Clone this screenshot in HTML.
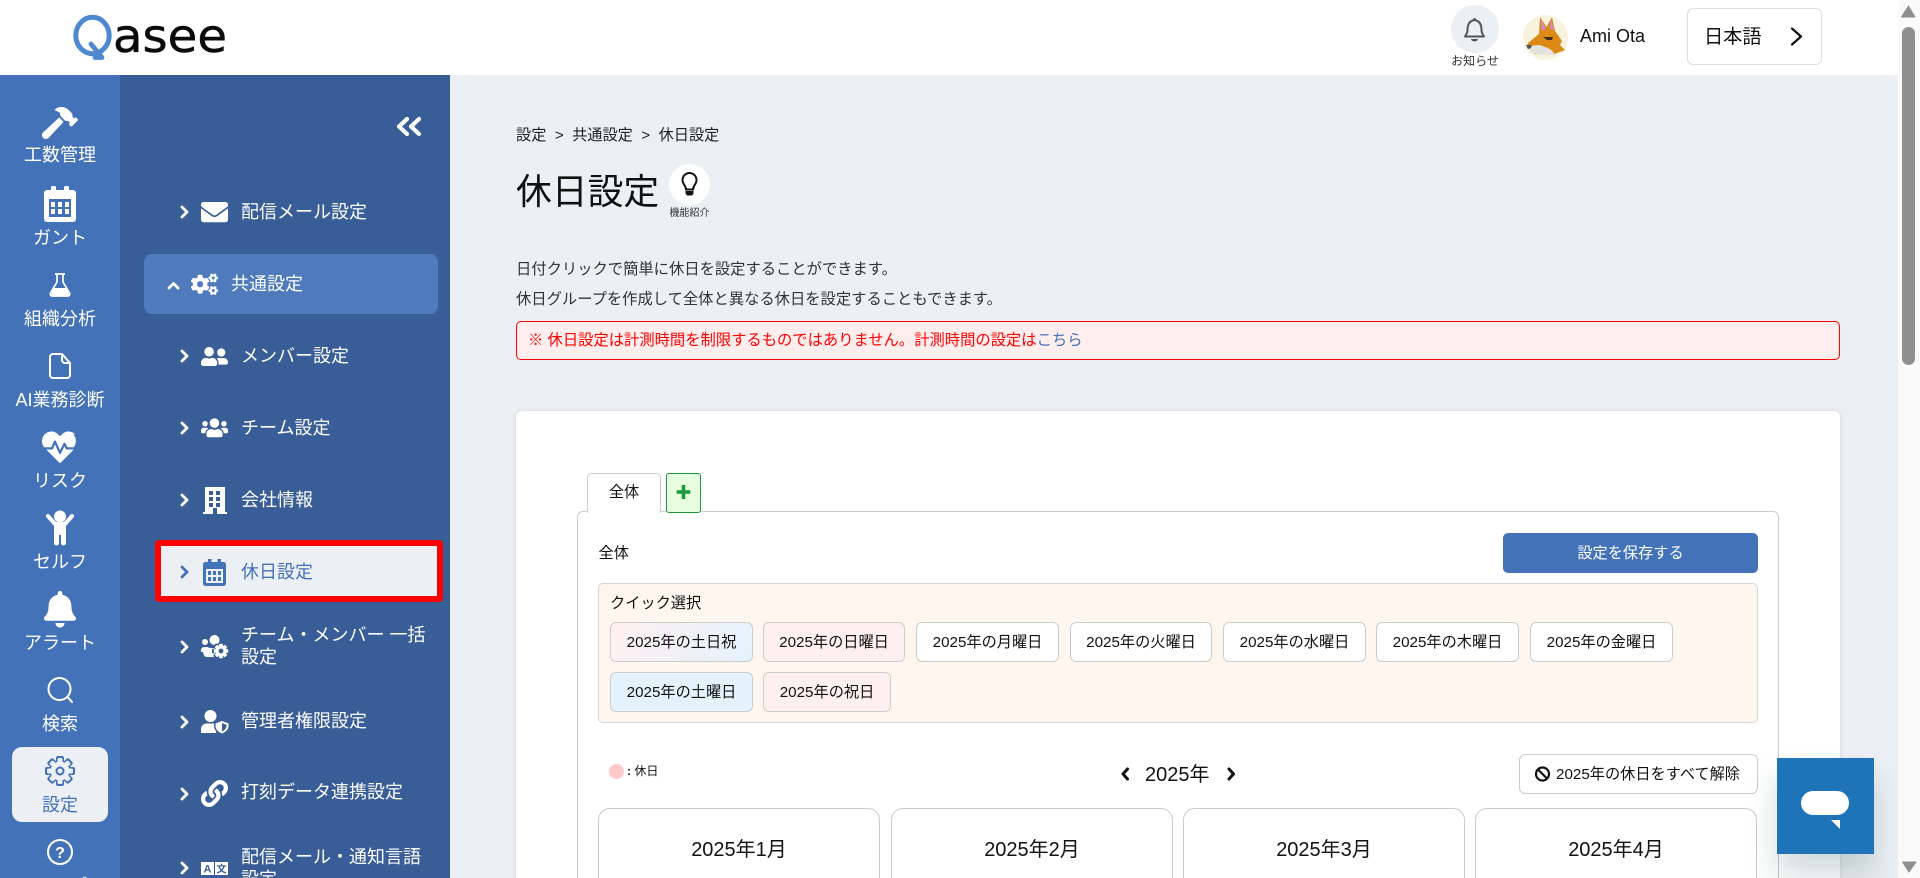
<!DOCTYPE html>
<html lang="ja"><head><meta charset="utf-8"><title>休日設定</title>
<style>
html,body{margin:0;padding:0;width:1920px;height:878px;overflow:hidden;background:#eceff4}
body{font-family:"Liberation Sans","Noto Sans CJK JP",sans-serif;color:#222;position:relative}
div{box-sizing:border-box}
.a{position:absolute}
.t{position:absolute;line-height:22px;white-space:nowrap}
.s1{position:absolute;left:0;width:120px;text-align:center;color:#fff;font-size:18px;line-height:22px;white-space:nowrap}
.s2{position:absolute;left:241px;color:#fff;font-size:18px;line-height:22px;white-space:nowrap}
.b{position:absolute;height:40px;border:1px solid #ccc;border-radius:6px;background:#fff;font-size:15.2px;line-height:40px;text-align:center;color:#111;white-space:nowrap}
.c{position:absolute;top:808px;height:90px;border:1px solid #ccc;border-radius:12px;background:#fff;font-size:20px;line-height:82px;text-align:center;color:#111}
</style></head><body>
<div class="a" style="left:0;top:0;width:1898px;height:75px;background:#fff"></div>
<div class="a" style="left:0;top:75px;width:120px;height:803px;background:#4472b9"></div>
<div class="a" style="left:120px;top:75px;width:330px;height:803px;background:#395e97"></div>
<div class="a" style="left:144px;top:254px;width:294px;height:60px;background:#4f7bbd;border-radius:8px"></div>
<div class="a" style="left:155px;top:540px;width:288px;height:62px;background:#eceff4;border:6px solid #f00;border-radius:4px"></div>
<div class="a" style="left:12px;top:747px;width:96px;height:75px;background:#eceff4;border-radius:10px"></div>
<div class="a" style="left:516px;top:411px;width:1324px;height:480px;background:#fff;border-radius:6px;box-shadow:0 0 4px rgba(0,0,0,.12)"></div>
<div class="a" style="left:516px;top:321px;width:1324px;height:39px;background:#ffeeee;border:1px solid #f00;border-radius:5px"></div>
<div class="a" style="left:669px;top:164px;width:41px;height:41px;background:#fff;border-radius:50%"></div>
<div class="a" style="left:1451px;top:5px;width:48px;height:48px;background:#eceff4;border-radius:50%"></div>
<div class="a" style="left:1687px;top:8px;width:135px;height:57px;background:#fff;border:1px solid #ddd;border-radius:6px"></div>
<div class="a" style="left:577px;top:511px;width:1202px;height:400px;border:1px solid #ccc;border-radius:6px;background:#fff"></div>
<div class="a" style="left:587px;top:473px;width:74px;height:40px;border:1px solid #ccc;border-bottom:0;border-radius:5px 5px 0 0;background:#fff"></div>
<div class="a" style="left:666px;top:473px;width:35px;height:40px;border:1px solid #1a9a3c;border-radius:3px;background:#e8fde0"></div>
<div class="a" style="left:598px;top:583px;width:1160px;height:140px;background:#fff6ef;border:1px solid #d5d5d5;border-radius:5px"></div>

<svg class="a" style="left:0;top:0" width="1920" height="878" viewBox="0 0 1920 878">
<defs>
<g id="g"><circle r="11"/><rect x="-4" y="-15" width="8" height="30" rx="2"/><rect x="-4" y="-15" width="8" height="30" rx="2" transform="rotate(45)"/><rect x="-4" y="-15" width="8" height="30" rx="2" transform="rotate(90)"/><rect x="-4" y="-15" width="8" height="30" rx="2" transform="rotate(135)"/></g>
<g id="gi"><circle r="9.5"/><rect x="-2.5" y="-13" width="5" height="26" rx="1.5"/><rect x="-2.5" y="-13" width="5" height="26" rx="1.5" transform="rotate(45)"/><rect x="-2.5" y="-13" width="5" height="26" rx="1.5" transform="rotate(90)"/><rect x="-2.5" y="-13" width="5" height="26" rx="1.5" transform="rotate(135)"/></g>
<path id="ch" d="M182 -5 L187 0 L182 5" fill="none" stroke-width="2.8" stroke-linecap="round" stroke-linejoin="round"/>
</defs>
<!-- logo -->
<ellipse cx="92.500" cy="35.500" rx="16.700" ry="18.200" fill="none" stroke="#4d88d0" stroke-width="5"/>
<path d="M91 44 L102 57.500 H95" fill="none" stroke="#4d88d0" stroke-width="4.800" stroke-linecap="round" stroke-linejoin="round"/>
<text x="113" y="52" font-family="DejaVu Sans" font-size="46" textLength="114" lengthAdjust="spacingAndGlyphs" fill="#0b0b0b" stroke="#0b0b0b" stroke-width=".5">asee</text>
<!-- hammer -->
<path transform="translate(42 107) scale(.0625)" fill="#fff" d="M571.31 193.94l-22.63-22.63c-6.25-6.25-16.38-6.25-22.63 0l-11.31 11.31-28.9-28.9c5.63-21.31.36-44.9-16.35-61.61l-45.25-45.25c-62.48-62.48-163.79-62.48-226.28 0l90.51 45.25v18.75c0 16.97 6.74 33.25 18.75 45.25l49.14 49.14c16.71 16.71 40.3 21.98 61.61 16.35l28.9 28.9-11.31 11.31c-6.25 6.25-6.25 16.38 0 22.63l22.63 22.63c6.25 6.25 16.38 6.25 22.63 0l90.51-90.51c6.23-6.24 6.23-16.37-.01-22.62zm-286.72-15.2c-3.7-3.7-6.84-7.79-9.85-11.95L19.64 404.96c-25.57 23.88-26.26 64.19-1.53 88.93s65.05 24.05 88.93-1.53l238.13-255.07c-3.96-2.91-7.9-5.87-11.44-9.41l-49.14-49.14z"/>
<!-- gantt calendar -->
<g fill="#fff"><rect x="44" y="190" width="32" height="32" rx="3"/><rect x="51" y="186" width="5" height="7" rx="1.500"/><rect x="64" y="186" width="5" height="7" rx="1.500"/></g>
<rect x="49" y="199" width="22" height="18" fill="#4472b9"/>
<g fill="#fff"><rect x="51" y="202" width="4" height="5"/><rect x="58" y="202" width="4" height="5"/><rect x="65" y="202" width="4" height="5"/><rect x="51" y="209" width="4" height="5"/><rect x="58" y="209" width="4" height="5"/><rect x="65" y="209" width="4" height="5"/></g>
<!-- flask -->
<path d="M55 274 H65 M57 274 V282 L50.500 293 A2 2 0 0 0 52 296 H68 A2 2 0 0 0 69.500 293 L63 282 V274" fill="none" stroke="#fff" stroke-width="1.700"/>
<path d="M54 288 H66 L69 294 L68 296 H52 L51 294 Z" fill="#fff"/>
<!-- file -->
<path d="M53 354 H62 L70 363 V375 A3 3 0 0 1 67 378 H53 A3 3 0 0 1 50 375 V357 A3 3 0 0 1 53 354 Z M62 354 V360 A3 3 0 0 0 65 363 H70" fill="none" stroke="#fff" stroke-width="2"/>
<!-- heartbeat -->
<path transform="translate(42 429.200) scale(.0703)" fill="#fff" d="M320.2 243.8l-49.7 99.4c-6 12.1-23.4 11.7-28.9-.6l-56.9-126.3-30 71.7H60.6l182.5 186.5c7.1 7.3 18.6 7.3 25.7 0L451.4 288H342.3l-22.1-44.2zM473.7 73.9l-2.4-2.5c-51.5-52.6-135.8-52.6-187.4 0L256 100l-27.9-28.5c-51.5-52.7-135.9-52.7-187.4 0l-2.4 2.4C-10.4 123.7-12.5 203 31 256h102.4l35.9-86.2c5.4-12.9 23.6-13.2 29.4-.4l58.2 129.3 49-97.9c5.9-11.8 22.7-11.8 28.6 0l27.6 55.2h88.9c43.4-53 41.3-132.3-7.3-182.1z"/>
<!-- person -->
<circle cx="60" cy="516.500" r="6" fill="#fff"/>
<path d="M48 516 L55 524 H65 L72 516" fill="none" stroke="#fff" stroke-width="4" stroke-linecap="round" stroke-linejoin="round"/>
<path d="M54 523 H66 V543 A2.500 2.500 0 0 1 61 543 V535 H59 V543 A2.500 2.500 0 0 1 54 543 Z" fill="#fff"/>
<!-- bell -->
<path transform="translate(44 591) scale(.0714)" fill="#fff" d="M224 512c35.32 0 63.97-28.65 63.97-64H160.03c0 35.35 28.65 64 63.97 64zm215.39-149.71c-19.32-20.76-55.47-51.99-55.47-154.29 0-77.7-54.48-139.9-127.94-155.16V32c0-17.67-14.32-32-31.98-32s-31.98 14.33-31.98 32v20.84C118.56 68.1 64.08 130.3 64.08 208c0 102.3-36.15 133.53-55.47 154.29-6 6.45-8.66 14.16-8.61 21.71.11 16.4 12.98 32 32.1 32h383.8c19.12 0 32-15.6 32.1-32 .05-7.55-2.61-15.27-8.61-21.71z"/>
<!-- search -->
<circle cx="59.500" cy="689" r="11" fill="none" stroke="#fff" stroke-width="2"/><path d="M67.500 697 L72 702" stroke="#fff" stroke-width="2" stroke-linecap="round"/>
<!-- settings gear -->
<use href="#g" x="60" y="771" fill="#4472b9"/><use href="#gi" x="60" y="771" fill="#eceff4"/><circle cx="60" cy="771" r="3.500" fill="none" stroke="#4472b9" stroke-width="2"/>
<!-- help -->
<circle cx="60" cy="852" r="12" fill="none" stroke="#fff" stroke-width="2"/>
<text x="60" y="858" text-anchor="middle" font-size="16" font-weight="bold" fill="#fff" font-family="Liberation Sans">?</text>
<!-- collapse -->
<path d="M407 119 L399 126.500 L407 134 M419 119 L411 126.500 L419 134" fill="none" stroke="#fff" stroke-width="4.200" stroke-linecap="round" stroke-linejoin="round"/>
<!-- chevrons -->
<g stroke="#fff"><use href="#ch" y="212"/><use href="#ch" y="356"/><use href="#ch" y="428"/><use href="#ch" y="500"/><use href="#ch" y="647"/><use href="#ch" y="722"/><use href="#ch" y="794"/><use href="#ch" y="868"/></g>
<use href="#ch" y="572" stroke="#4472b9"/>
<path d="M169 288 L173.500 283.500 L178 288" fill="none" stroke="#fff" stroke-width="2.800" stroke-linecap="round" stroke-linejoin="round"/>
<!-- envelope -->
<path transform="translate(201 198.600) scale(.0527)" fill="#fff" d="M502.3 190.8c3.9-3.1 9.7-.2 9.7 4.7V400c0 26.5-21.5 48-48 48H48c-26.5 0-48-21.5-48-48V195.6c0-5 5.7-7.8 9.7-4.7 22.4 17.4 52.1 39.5 154.1 113.6 21.1 15.4 56.7 47.8 92.2 47.6 35.7.3 72-32.8 92.3-47.6 102-74.1 131.6-96.3 154-113.7zM256 320c23.2.4 56.6-29.2 73.4-41.4 132.7-96.3 142.8-104.7 173.4-128.7 5.8-4.5 9.2-11.5 9.2-18.9v-19c0-26.5-21.5-48-48-48H48C21.5 64 0 85.5 0 112v19c0 7.4 3.4 14.3 9.2 18.9 30.6 23.9 40.7 32.4 173.4 128.7 16.8 12.2 50.2 41.8 73.4 41.4z"/>
<!-- cogs -->
<path transform="translate(191 273.500) scale(.0422)" fill="#fff" d="M512.1 191l-8.2 14.3c-3 5.3-9.4 7.5-15.1 5.4-11.8-4.4-22.6-10.7-32.1-18.6-4.6-3.8-5.8-10.5-2.8-15.7l8.2-14.3c-6.9-8-12.3-17.3-15.9-27.4h-16.5c-6 0-11.2-4.3-12.2-10.3-2-12-2.1-24.6 0-37.1 1-6 6.2-10.4 12.2-10.4h16.5c3.6-10.1 9-19.4 15.9-27.4l-8.2-14.3c-3-5.2-1.9-11.9 2.8-15.7 9.5-7.9 20.4-14.2 32.1-18.6 5.7-2.1 12.1.1 15.1 5.4l8.2 14.3c10.5-1.9 21.2-1.9 31.7 0L552 6.3c3-5.3 9.4-7.5 15.1-5.4 11.8 4.4 22.6 10.7 32.1 18.6 4.6 3.8 5.8 10.5 2.8 15.7l-8.2 14.3c6.9 8 12.3 17.3 15.9 27.4h16.5c6 0 11.2 4.3 12.2 10.3 2 12 2.1 24.6 0 37.1-1 6-6.2 10.4-12.2 10.4h-16.5c-3.6 10.1-9 19.4-15.9 27.4l8.2 14.3c3 5.2 1.9 11.9-2.8 15.7-9.5 7.9-20.4 14.2-32.1 18.6-5.7 2.1-12.1-.1-15.1-5.4l-8.2-14.3c-10.4 1.9-21.2 1.9-31.7 0zm-10.5-58.8c38.5 29.6 82.4-14.3 52.8-52.8-38.5-29.7-82.4 14.3-52.8 52.8zM386.3 286.1l33.7 16.8c10.1 5.8 14.5 18.1 10.5 29.1-8.9 24.2-26.4 46.4-42.6 65.8-7.4 8.9-20.2 11.1-30.3 5.3l-29.1-16.8c-16 13.7-34.6 24.6-54.9 31.7v33.6c0 11.6-8.3 21.6-19.7 23.6-24.6 4.2-50.4 4.4-75.9 0-11.5-2-20-11.9-20-23.6V418c-20.3-7.2-38.9-18-54.9-31.7L74 403c-10 5.8-22.9 3.6-30.3-5.3-16.2-19.4-33.3-41.6-42.2-65.7-4-10.9.4-23.2 10.5-29.1l33.3-16.8c-3.9-20.9-3.9-42.4 0-63.4L12 205.8c-10.1-5.8-14.6-18.1-10.5-29 8.9-24.2 26-46.4 42.2-65.8 7.4-8.9 20.2-11.1 30.3-5.3l29.1 16.8c16-13.7 34.6-24.6 54.9-31.7V57.1c0-11.5 8.2-21.5 19.6-23.5 24.6-4.2 50.5-4.4 76-.1 11.5 2 20 11.9 20 23.6v33.6c20.3 7.2 38.9 18 54.9 31.7l29.1-16.8c10-5.8 22.9-3.6 30.3 5.3 16.2 19.4 33.2 41.6 42.1 65.8 4 10.9.1 23.2-10 29.1l-33.7 16.8c3.9 21 3.9 42.5 0 63.5zm-117.6 21.1c59.2-77-28.7-164.9-105.7-105.7-59.2 77 28.7 164.9 105.7 105.7zm243.4 182.7l-8.2 14.3c-3 5.3-9.4 7.5-15.1 5.4-11.8-4.4-22.6-10.7-32.1-18.6-4.6-3.8-5.8-10.5-2.8-15.7l8.2-14.3c-6.9-8-12.3-17.3-15.9-27.4h-16.5c-6 0-11.2-4.3-12.2-10.3-2-12-2.1-24.6 0-37.1 1-6 6.2-10.4 12.2-10.4h16.5c3.6-10.1 9-19.4 15.9-27.4l-8.2-14.3c-3-5.2-1.9-11.9 2.8-15.7 9.5-7.9 20.4-14.2 32.1-18.6 5.7-2.1 12.1.1 15.1 5.4l8.2 14.3c10.5-1.9 21.2-1.9 31.7 0l8.2-14.3c3-5.3 9.4-7.5 15.1-5.4 11.8 4.4 22.6 10.7 32.1 18.6 4.6 3.8 5.8 10.5 2.8 15.7l-8.2 14.3c6.9 8 12.3 17.3 15.9 27.4h16.5c6 0 11.2 4.3 12.2 10.3 2 12 2.1 24.6 0 37.1-1 6-6.2 10.4-12.2 10.4h-16.5c-3.6 10.1-9 19.4-15.9 27.4l8.2 14.3c3 5.2 1.9 11.9-2.8 15.7-9.5 7.9-20.4 14.2-32.1 18.6-5.7 2.1-12.1-.1-15.1-5.4l-8.2-14.3c-10.4 1.9-21.2 1.9-31.7 0zM501.6 431c38.5 29.6 82.4-14.3 52.8-52.8-38.5-29.6-82.4 14.3-52.8 52.8z"/>
<!-- user-friends -->
<path transform="translate(201 345.700) scale(.0422)" fill="#fff" d="M192 256c61.9 0 112-50.1 112-112S253.9 32 192 32 80 82.1 80 144s50.1 112 112 112zm76.8 32h-8.3c-20.8 10-43.9 16-68.5 16s-47.6-6-68.5-16h-8.3C51.6 288 0 339.6 0 403.2V432c0 26.5 21.5 48 48 48h288c26.5 0 48-21.5 48-48v-28.8c0-63.6-51.6-115.2-115.2-115.2zM480 256c53 0 96-43 96-96s-43-96-96-96-96 43-96 96 43 96 96 96zm48 32h-3.800c-13.900 4.800-28.600 8-44.200 8s-30.300-3.200-44.200-8H432c-20.400 0-39.200 5.900-55.700 15.400 24.400 26.300 39.700 61.200 39.700 99.800v38.400c0 2.200-.5 4.300-.6 6.400H592c26.500 0 48-21.500 48-48 0-61.900-50.100-112-112-112z"/>
<!-- users -->
<path transform="translate(201 417) scale(.0422)" fill="#fff" d="M96 224c35.3 0 64-28.7 64-64s-28.7-64-64-64-64 28.7-64 64 28.7 64 64 64zm448 0c35.3 0 64-28.7 64-64s-28.7-64-64-64-64 28.7-64 64 28.7 64 64 64zm32 32h-64c-17.6 0-33.5 7.1-45.1 18.6 40.3 22.1 68.9 62 75.1 109.4h66c17.7 0 32-14.3 32-32v-32c0-35.3-28.7-64-64-64zm-256 0c61.9 0 112-50.1 112-112S381.9 32 320 32 208 82.1 208 144s50.1 112 112 112zm76.8 32h-8.3c-20.8 10-43.9 16-68.5 16s-47.6-6-68.5-16h-8.3C179.6 288 128 339.6 128 403.2V432c0 26.5 21.5 48 48 48h288c26.5 0 48-21.5 48-48v-28.8c0-63.6-51.6-115.2-115.2-115.2zm-223.7-13.4C161.5 263.1 145.6 256 128 256H64c-35.3 0-64 28.7-64 64v32c0 17.7 14.3 32 32 32h65.9c6.3-47.4 34.9-87.3 75.2-109.4z"/>
<!-- building -->
<path d="M205 487 H225 V512 H227 V514 H203 V512 H205 Z" fill="#fff"/>
<g fill="#395e97"><rect x="209" y="491" width="4" height="4"/><rect x="216" y="491" width="4" height="4"/><rect x="209" y="497" width="4" height="4"/><rect x="216" y="497" width="4" height="4"/><rect x="209" y="503" width="4" height="4"/><rect x="216" y="503" width="4" height="4"/><rect x="213" y="508" width="4" height="6"/></g>
<!-- active calendar -->
<g fill="#4472b9"><rect x="203" y="562" width="23" height="24" rx="2.500"/><rect x="208" y="559" width="3.500" height="5"/><rect x="217.500" y="559" width="3.500" height="5"/></g>
<rect x="206" y="569" width="17" height="14" fill="#eceff4"/>
<g fill="#4472b9"><rect x="208" y="571" width="3" height="4"/><rect x="213" y="571" width="3" height="4"/><rect x="218" y="571" width="3" height="4"/><rect x="208" y="577" width="3" height="4"/><rect x="213" y="577" width="3" height="4"/><rect x="218" y="577" width="3" height="4"/></g>
<!-- team settings -->
<g fill="#fff"><circle cx="205" cy="642" r="3"/><circle cx="214.500" cy="640" r="5"/><path d="M201 652 V650 A3 3 0 0 1 204 647 H208 L206 652 Z"/><path d="M206 657 A4 4 0 0 1 210 648 H219 C217 651 216 654 218 657 Z"/></g>
<g transform="translate(221 651) scale(.48)"><use href="#g" fill="#395e97" transform="scale(1.250)"/><use href="#g" fill="#fff"/><circle r="5" fill="#395e97"/></g>
<!-- admin -->
<g fill="#fff"><circle cx="210.500" cy="716" r="6"/><path d="M201 733 V729 A5.500 5.500 0 0 1 206 723.500 H215 A5.500 5.500 0 0 1 217 724.500 L216 733 Z"/></g>
<path d="M222 719.500 L230 722.500 V726 C230 730 226.500 733.500 222 735 C217.500 733.500 214 730 214 726 V722.500 Z" fill="#395e97"/>
<path d="M222 721 L228.500 723.500 V726 C228.500 729.500 225.500 732 222 733.500 C218.500 732 215.500 729.500 215.500 726 V723.500 Z" fill="#fff"/>
<path d="M222 723 L226.500 724.800 V726 C226.500 728.500 224.500 730.300 222 731.500 Z" fill="#395e97"/>
<!-- link -->
<path transform="translate(201 780) scale(.0527)" fill="#fff" d="M326.612 185.391c59.747 59.809 58.927 155.698.36 214.59-.11.12-.24.25-.36.37l-67.2 67.2c-59.27 59.27-155.699 59.262-214.96 0-59.27-59.26-59.27-155.7 0-214.96l37.106-37.106c9.84-9.84 26.786-3.3 27.294 10.606.648 17.722 3.826 35.527 9.69 52.721 1.986 5.822.567 12.262-3.783 16.612l-13.087 13.087c-28.026 28.026-28.905 73.66-1.155 101.96 28.024 28.579 74.086 28.749 102.325.51l67.2-67.19c28.191-28.191 28.073-73.757 0-101.83-3.701-3.694-7.429-6.564-10.341-8.569a16.037 16.037 0 0 1-6.947-12.606c-.396-10.567 3.348-21.456 11.698-29.806l21.054-21.055c5.521-5.521 14.182-6.199 20.584-1.731a152.482 152.482 0 0 1 20.522 17.197zM467.547 44.449c-59.261-59.262-155.69-59.27-214.96 0l-67.2 67.2c-.12.12-.25.25-.36.37-58.566 58.892-59.387 154.781.36 214.59a152.454 152.454 0 0 0 20.521 17.196c6.402 4.468 15.064 3.789 20.584-1.731l21.054-21.055c8.35-8.35 12.094-19.239 11.698-29.806a16.037 16.037 0 0 0-6.947-12.606c-2.912-2.005-6.64-4.875-10.341-8.569-28.073-28.073-28.191-73.639 0-101.83l67.2-67.19c28.239-28.239 74.3-28.069 102.325.51 27.75 28.3 26.872 73.934-1.155 101.96l-13.087 13.087c-4.35 4.35-5.769 10.79-3.783 16.612 5.864 17.194 9.042 34.999 9.69 52.721.509 13.906 17.454 20.446 27.294 10.606l37.106-37.106c59.271-59.259 59.271-155.699.001-214.959z"/>
<!-- language -->
<rect x="201" y="862" width="13" height="13" fill="#fff"/><rect x="215" y="862" width="13" height="13" fill="#fff"/>
<text x="207.500" y="872.500" text-anchor="middle" font-size="11" font-weight="bold" fill="#395e97" font-family="Liberation Sans">A</text>
<text x="221.500" y="872.500" text-anchor="middle" font-size="10" font-weight="bold" fill="#395e97" font-family="Noto Sans CJK JP">文</text>
<!-- bulb -->
<path d="M686 189.500 C686 185.500 682.500 184.500 682.500 180 A7 7 0 0 1 696.500 180 C696.500 184.500 693 185.500 693 189.500 Z" fill="none" stroke="#111" stroke-width="2"/>
<path d="M685.500 191 H693.500 V193.500 L692 195.500 H687 L685.500 193.500 Z" fill="#111"/>
<!-- top bell -->
<path d="M1474.500 18 V20 C1468.500 21 1467.500 26 1467.500 30 C1467.500 33 1466 35 1465 36.500 H1484 C1483 35 1481.500 33 1481.500 30 C1481.500 26 1480.500 21 1474.500 20" fill="none" stroke="#555" stroke-width="2" stroke-linejoin="round"/>
<path d="M1471 39 H1478 A3.500 2.500 0 0 1 1471 39 Z" fill="#555"/>
<!-- avatar -->
<circle cx="1545.500" cy="37.500" r="22.500" fill="#f7f3df"/>
<path d="M1539 34 L1540 17 L1546.500 27 L1552 17 L1555 31 L1562 41 L1560 45 L1565 50 L1552 55 L1535 54 L1527 48 L1528 43 Z" fill="#dd8a15"/>
<path d="M1541 19 L1541.500 31 L1546 29 Z M1551.500 19 L1549.500 28 L1554 31 Z" fill="#d58ac0"/>
<path d="M1527 46 L1540 45 L1550 49 L1556 55 L1540 55 L1530 52 Z" fill="#e3e3e0"/>
<path d="M1526 45 L1532 45 L1531 48 L1528 49 Z" fill="#555"/>
<path d="M1543 37 L1553 37 L1552 40 L1547 40 Z" fill="#3a3020"/>
<!-- lang chevron -->
<path d="M1792 28.500 L1801 36.500 L1792 44.500" fill="none" stroke="#111" stroke-width="2.200" stroke-linecap="round" stroke-linejoin="round"/>
<!-- plus -->
<path d="M683.500 485 V499 M676.700 492 H690.300" stroke="#1a9a3c" stroke-width="3.600" stroke-linecap="butt"/>
<!-- legend & year chevrons -->
<circle cx="616.500" cy="771.500" r="7.500" fill="#ffc9c9"/>
<path d="M1127.500 769 L1123 774 L1127.500 779 M1229 769 L1233.500 774 L1229 779" fill="none" stroke="#111" stroke-width="3" stroke-linecap="round" stroke-linejoin="round"/>
</svg>

<!-- top bar text -->
<div class="t" style="left:1451px;width:48px;text-align:center;top:50px;font-size:12px;color:#333">お知らせ</div>
<div class="t" style="left:1580px;top:25px;font-size:18px;color:#111">Ami Ota</div>
<div class="t" style="left:1704px;top:27px;font-size:19.200px;color:#111">日本語</div>

<!-- sidebar 1 -->
<div class="s1" style="top:144px">工数管理</div>
<div class="s1" style="top:227px">ガント</div>
<div class="s1" style="top:308px">組織分析</div>
<div class="s1" style="top:389px">AI業務診断</div>
<div class="s1" style="top:470px">リスク</div>
<div class="s1" style="top:551px">セルフ</div>
<div class="s1" style="top:632px">アラート</div>
<div class="s1" style="top:713px">検索</div>
<div class="s1" style="top:794px;color:#4472b9">設定</div>
<div class="s1" style="top:875px">ヘルプ</div>

<!-- sidebar 2 -->
<div class="s2" style="top:201px">配信メール設定</div>
<div class="s2" style="left:231px;top:273px">共通設定</div>
<div class="s2" style="top:345px">メンバー設定</div>
<div class="s2" style="top:417px">チーム設定</div>
<div class="s2" style="top:489px">会社情報</div>
<div class="s2" style="top:561px;color:#4472b9">休日設定</div>
<div class="s2" style="top:624px">チーム・メンバー 一括<br>設定</div>
<div class="s2" style="top:710px">管理者権限設定</div>
<div class="s2" style="top:781px">打刻データ連携設定</div>
<div class="s2" style="top:846px">配信メール・通知言語<br>設定</div>

<!-- heading -->
<div class="t" style="left:516px;top:125px;font-size:15.200px;color:#222">設定&nbsp; &gt; &nbsp;共通設定&nbsp; &gt; &nbsp;休日設定</div>
<div class="t" style="left:516px;top:181px;font-size:35.800px;color:#111">休日設定</div>
<div class="t" style="left:669px;width:41px;text-align:center;top:203px;font-size:10px;color:#333">機能紹介</div>
<div class="t" style="left:516px;top:259px;font-size:15.300px;color:#333">日付クリックで簡単に休日を設定することができます。</div>
<div class="t" style="left:516px;top:289px;font-size:15.300px;color:#333">休日グループを作成して全体と異なる休日を設定することもできます。</div>
<div class="t" style="left:528px;top:330px;font-size:15.300px;color:#f00">※ 休日設定は計測時間を制限するものではありません。計測時間の設定は<span style="color:#4472b9">こちら</span></div>

<!-- panel -->
<div class="t" style="left:587px;width:74px;text-align:center;top:481.500px;font-size:15.200px;color:#111">全体</div>
<div class="t" style="left:598.500px;top:542.500px;font-size:15.200px;color:#111">全体</div>
<div class="a" style="left:1503px;top:533px;width:255px;height:40px;background:#4472b9;border-radius:5px;color:#fff;font-size:15.200px;line-height:41px;text-align:center">設定を保存する</div>
<div class="t" style="left:610px;top:592.500px;font-size:15.200px;color:#111">クイック選択</div>
<div class="b" style="left:610px;top:622px;width:143px;background:linear-gradient(120deg,#fff0f0,#e4f2fd)">2025年の土日祝</div>
<div class="b" style="left:763px;top:622px;width:142px;background:#fff0f0">2025年の日曜日</div>
<div class="b" style="left:916px;top:622px;width:143px">2025年の月曜日</div>
<div class="b" style="left:1070px;top:622px;width:142px">2025年の火曜日</div>
<div class="b" style="left:1223px;top:622px;width:143px">2025年の水曜日</div>
<div class="b" style="left:1376px;top:622px;width:143px">2025年の木曜日</div>
<div class="b" style="left:1530px;top:622px;width:143px">2025年の金曜日</div>
<div class="b" style="left:610px;top:672px;width:143px;background:#e3f2fd">2025年の土曜日</div>
<div class="b" style="left:763px;top:672px;width:128px;background:#fff0f0">2025年の祝日</div>
<div class="t" style="left:627px;top:760px;font-size:12px;color:#111"><b>:</b> 休日</div>
<div class="t" style="left:1145px;top:764px;font-size:20px;color:#111">2025年</div>
<div class="b" style="left:1519px;top:754px;width:239px;text-align:left;padding-left:36px">2025年の休日をすべて解除</div>
<svg class="a" style="left:1534px;top:765px" width="18" height="18"><circle cx="8.500" cy="9" r="6.500" fill="none" stroke="#111" stroke-width="2.200"/><path d="M4 4.500 L13 13.500" stroke="#111" stroke-width="2.200"/></svg>
<div class="c" style="left:598px;width:282px">2025年1月</div>
<div class="c" style="left:891px;width:282px">2025年2月</div>
<div class="c" style="left:1183px;width:282px">2025年3月</div>
<div class="c" style="left:1475px;width:282px">2025年4月</div>

<!-- chat -->
<div class="a" style="left:1777px;top:758px;width:97px;height:96px;background:#1f73b7;box-shadow:0 20px 28px rgba(23,73,77,.2)">
<svg width="97" height="96" style="display:block"><rect x="24" y="33" width="48" height="24" rx="12" fill="#fff"/><path d="M54 62 H63 V71 Z" fill="#fff"/></svg></div>

<!-- scrollbar -->
<div class="a" style="left:1898px;top:0;width:22px;height:878px;background:#fafafa"></div>
<svg class="a" style="left:1898px;top:0" width="22" height="878"><path d="M10.500 6 L17 17 H3.500 Z" fill="#8f8f8f" stroke="#8f8f8f" stroke-linejoin="round"/><rect x="4" y="27" width="13" height="338" rx="6.500" fill="#8f8f8f"/><path d="M11 872 L4.500 862 H18 Z" fill="#8f8f8f" stroke="#8f8f8f" stroke-linejoin="round"/></svg>
</body></html>
